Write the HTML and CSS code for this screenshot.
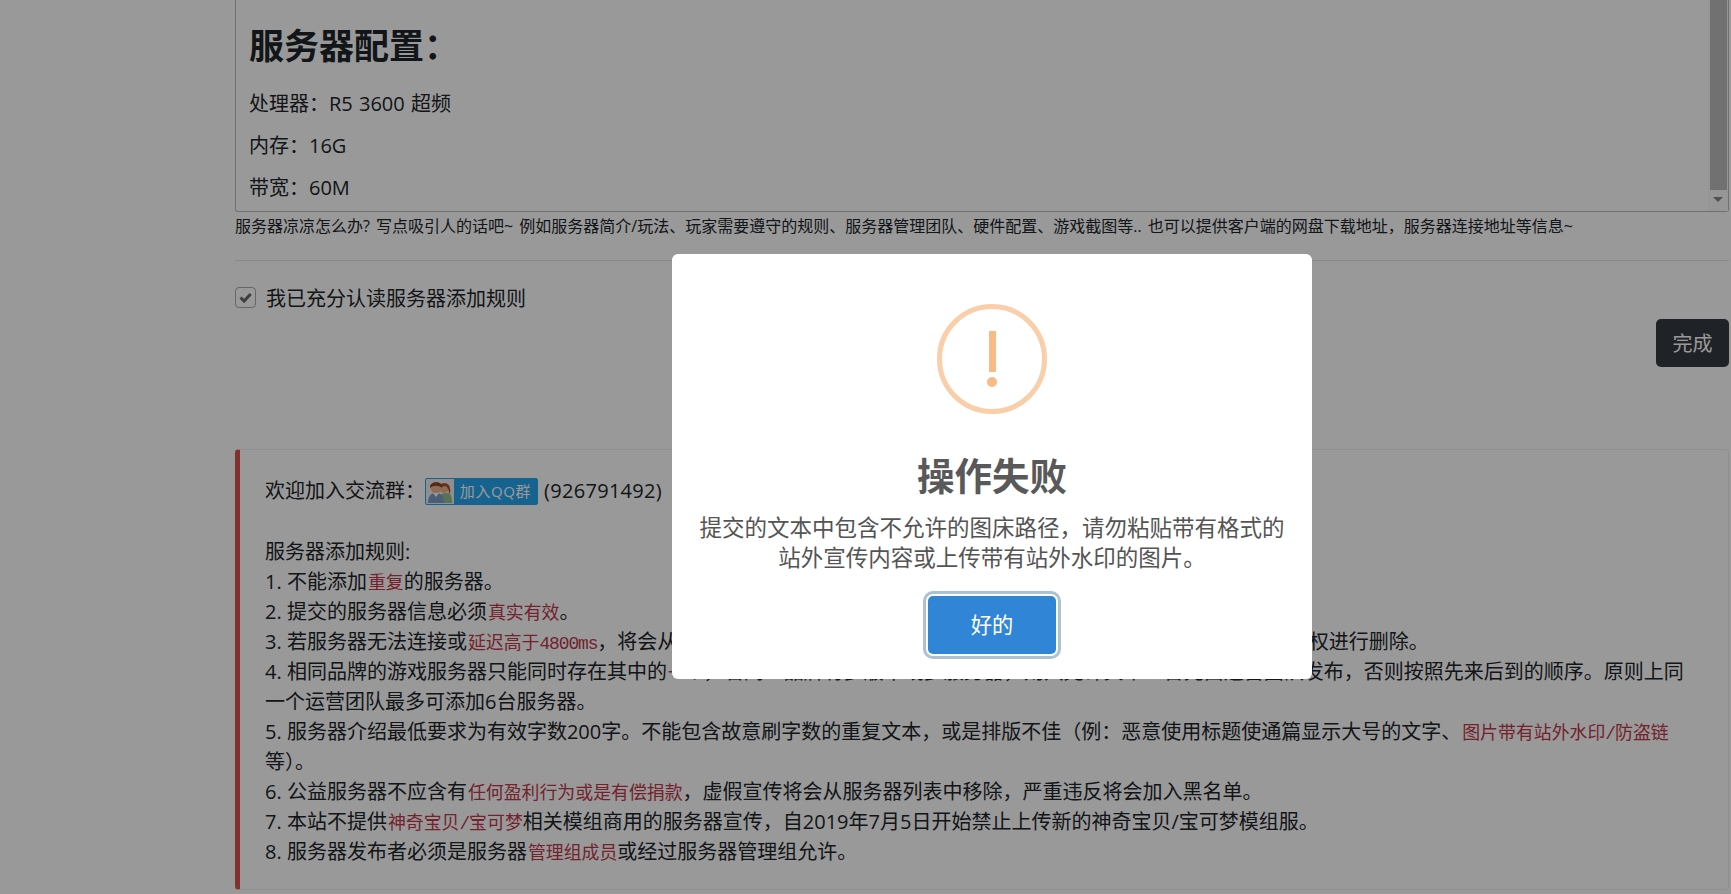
FILE: index.html
```html
<!DOCTYPE html>
<html lang="zh-CN">
<head>
  <meta charset="UTF-8">
  <meta name="viewport" content="width=device-width, initial-scale=1.0">
  <title>添加服务器</title>
  <link rel="stylesheet" href="styles.css">
</head>
<body>

  <div class="page">
    <div class="editor">
      <div class="editor-text">
        <h2>服务器配置：</h2>
        <p>处理器：R5 3600 超频</p>
        <p>内存：16G</p>
        <p>带宽：60M</p>
      </div>
      <div class="scrollbar">
        <div class="scroll-thumb"></div>
        <div class="scroll-arrow"></div>
      </div>
    </div>
    <div class="help">服务器凉凉怎么办? 写点吸引人的话吧~ 例如服务器简介/玩法、玩家需要遵守的规则、服务器管理团队、硬件配置、游戏截图等.. 也可以提供客户端的网盘下载地址，服务器连接地址等信息~</div>

    <hr>

    <label class="agree">
      <span class="checkbox">
        <svg viewBox="0 0 21 21" width="21" height="21"><path d="M5.5 10.5l3.6 3.6 6.6-7.2" fill="none" stroke="#6a6a6a" stroke-width="3"/></svg>
      </span>
      <span class="agree-text">我已充分认读服务器添加规则</span>
    </label>

    <div class="actions">
      <button class="btn-done">完成</button>
    </div>

    <div class="callout">
      <div class="qq-row">
        <span>欢迎加入交流群：</span>
        <span class="qq-btn">
          <span class="qq-icon">
            <svg viewBox="0 0 27 25" width="27" height="25">
              <path d="M13 24c0-7 2-10 7-10s6 3 6 10z" fill="#8fc08a"/>
              <circle cx="18" cy="9" r="5" fill="#eeb48f"/>
              <path d="M13 10c-1-7 11-8 11 0 1 2 0 4-1 5 0-4-1-7-4-8-2 1-5 1-6 3z" fill="#a9562e"/>
              <path d="M2 24c0-7 3-10 8-10s8 3 8 10z" fill="#7d9cc6"/>
              <path d="M7 14l3 4 3-4z" fill="#fff"/>
              <circle cx="10" cy="8.500" r="5.500" fill="#eeb48f"/>
              <path d="M4 9c-1-7 13-8 12 0-3-3-9-3-12 0z" fill="#8d4526"/>
            </svg>
          </span>
          <span class="qq-label">加入QQ群</span>
        </span>
        <span class="qq-num">(926791492)</span>
      </div>
      <div class="blank"></div>
      <div>服务器添加规则:</div>
      <div>1. 不能添加<code>重复</code>的服务器。</div>
      <div>2. 提交的服务器信息必须<code>真实有效</code>。</div>
      <div>3. 若服务器无法连接或<code>延迟高于<span class="latin">4800ms</span></code>，将会从服务器列表中移除，若7日内多次出现此情况或无法连接，本站管理组有权进行删除。</div>
      <div>4. 相同品牌的游戏服务器只能同时存在其中的<code>一个</code>，若同一品牌有多版本或多服务器，则只允许其中一台先由运营团队发布，否则按照先来后到的顺序。原则上同一个运营团队最多可添加6台服务器。</div>
      <div>5. 服务器介绍最低要求为有效字数200字。不能包含故意刷字数的重复文本，或是排版不佳（例：恶意使用标题使通篇显示大号的文字、<code>图片带有站外水印<span class="latin">/</span>防盗链</code>等）。</div>
      <div>6. 公益服务器不应含有<code>任何盈利行为或是有偿捐款</code>，虚假宣传将会从服务器列表中移除，严重违反将会加入黑名单。</div>
      <div>7. 本站不提供<code>神奇宝贝<span class="latin">/</span>宝可梦</code>相关模组商用的服务器宣传，自2019年7月5日开始禁止上传新的神奇宝贝/宝可梦模组服。</div>
      <div>8. 服务器发布者必须是服务器<code>管理组成员</code>或经过服务器管理组允许。</div>
    </div>
  </div>

  <!-- alert popup -->
  <div class="overlay">
    <div class="popup">
      <div class="alert-icon">
        <span class="alert-bar"></span>
        <span class="alert-dot"></span>
      </div>
      <h2 class="popup-title">操作失败</h2>
      <div class="popup-text">提交的文本中包含不允许的图床路径，请勿粘贴带有格式的<br>站外宣传内容或上传带有站外水印的图片。</div>
      <button class="btn-ok">好的</button>
    </div>
  </div>

</body>
</html>
```

FILE: styles.css
```css
html, body {
  height: 100%;
}

body {
  margin: 0;
  overflow: hidden;
  background-color: #fff;
  color: #212529;
  font-family: "Open Sans", "Noto Sans CJK SC", sans-serif;
  font-size: 20px;
  line-height: 30px;
}

.page {
  padding: 0 2px 0 235px;
}

/* Editor box, scrolled so its top is off screen */
.editor {
  display: flex;
  height: 212px;
  box-sizing: border-box;
  border: 1px solid #bbb;
  border-top: none;
  border-radius: 0 0 3px 3px;
}

.editor-text {
  flex: 1;
  padding: 23px 13px 0;
}

.editor-text h2 {
  margin: 0 0 20px;
  font-size: 35px;
  line-height: 46px;
  font-weight: bold;
}

.editor-text p {
  margin: 0 0 12px;
  word-spacing: 1px;
}

.scrollbar {
  display: flex;
  flex-direction: column;
  align-items: center;
  width: 20px;
  background-color: #fafafa;
}

.scroll-thumb {
  width: 17px;
  height: 190px;
  background-color: #bdbdbd;
}

.scroll-arrow {
  margin-top: 7px;
  border-left: 5px solid transparent;
  border-right: 5px solid transparent;
  border-top: 5px solid #888;
}

.help {
  margin-top: 2px;
  font-size: 16px;
  line-height: 24px;
  word-spacing: 2px;
}

hr {
  margin: 22px 0 21px;
  border: 0;
  border-top: 1px solid rgba(0, 0, 0, 0.1);
}

.agree {
  display: flex;
  align-items: center;
  gap: 10px;
  height: 30px;
}

.agree-text {
  padding-top: 3px;
}

.checkbox {
  display: block;
  width: 21px;
  height: 21px;
  box-sizing: border-box;
  border: 1px solid #aaa;
  border-radius: 4px;
  overflow: hidden;
}

.checkbox svg {
  display: block;
  margin: -1px;
}

.actions {
  display: flex;
  justify-content: flex-end;
  margin-top: 7px;
}

.btn-done {
  width: 73px;
  height: 48px;
  padding: 2px 0 0;
  background-color: #343a40;
  color: #fff;
  border: none;
  border-radius: 5px;
  font: inherit;
}

.callout {
  margin-top: 82px;
  height: 441px;
  box-sizing: border-box;
  padding: 26px 38px 0 25px;
  border: 1px solid #eee;
  border-left: 5px solid #d9534f;
  border-radius: 4px;
}

.qq-row {
  display: flex;
  align-items: center;
  height: 30px;
}

.qq-btn {
  display: flex;
  width: 113px;
  height: 27px;
  box-sizing: border-box;
  margin: 0 6px 0 0;
  border: 1px solid #27a5ee;
  border-radius: 2px;
  background-color: #27a5ee;
  overflow: hidden;
}

.qq-icon {
  display: block;
  width: 28px;
  background-color: #eee;
}

.qq-icon svg {
  display: block;
}

.qq-label {
  flex: 1;
  text-align: center;
  color: #fff;
  font-size: 15px;
  line-height: 25px;
  letter-spacing: 0.6px;
}

.qq-num {
  letter-spacing: 0.3px;
}

.blank {
  height: 31px;
}

code {
  padding-left: 1px;
  font-family: "Liberation Mono", "Noto Sans CJK SC", monospace;
  font-size: 17.9px;
  line-height: 1;
  color: #c0394b;
}

.latin {
  letter-spacing: -1.1px;
}

/* Popup over the whole page */
.overlay {
  position: fixed;
  top: 0;
  left: 0;
  width: 100%;
  height: 100%;
  display: flex;
  align-items: flex-start;
  padding: 254px 0 0 672px;
  box-sizing: border-box;
  background-color: rgba(0, 0, 0, 0.4);
}

.popup {
  display: flex;
  flex-direction: column;
  align-items: center;
  width: 640px;
  height: 425px;
  box-sizing: border-box;
  padding-top: 50px;
  background-color: #fff;
  border-radius: 6px;
  color: #545454;
}

.alert-icon {
  display: flex;
  flex-direction: column;
  align-items: center;
  width: 110px;
  height: 110px;
  box-sizing: border-box;
  padding-top: 22px;
  border: 5px solid #facea8;
  border-radius: 50%;
}

.alert-bar {
  width: 7px;
  height: 41px;
  background-color: #f8bb86;
}

.alert-dot {
  width: 10px;
  height: 10px;
  margin-top: 5px;
  border-radius: 50%;
  background-color: #f8bb86;
}

.popup-title {
  margin: 35px 0 0;
  font-size: 37.5px;
  line-height: 54px;
  font-weight: bold;
  color: #595959;
}

.popup-text {
  margin-top: 10px;
  font-size: 22.5px;
  line-height: 30px;
  text-align: center;
}

.btn-ok {
  width: 128px;
  height: 58px;
  margin-top: 23px;
  padding: 0;
  background-color: #3085d6;
  color: #fff;
  border: none;
  border-radius: 5px;
  box-shadow: 0 0 0 2px #fff, 0 0 0 5px rgba(50, 100, 150, 0.4);
  font: inherit;
  font-size: 21.25px;
}
```
